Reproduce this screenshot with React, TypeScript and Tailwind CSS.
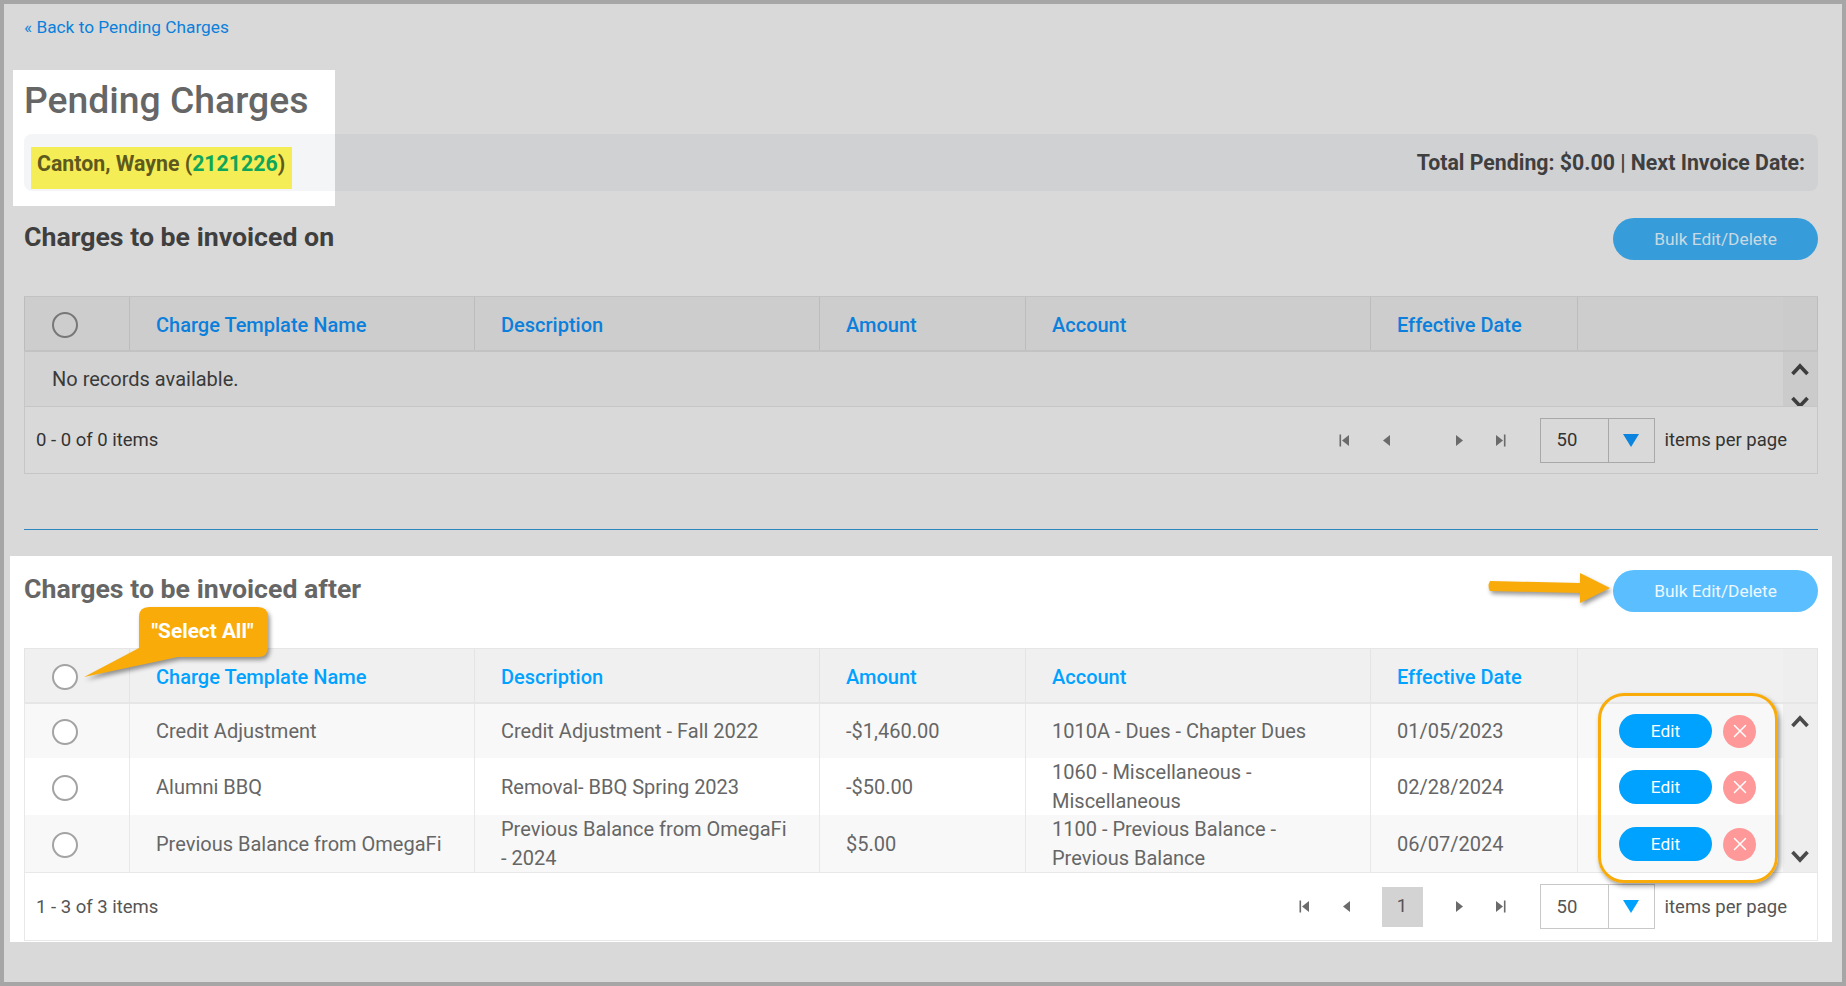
import React from 'react';
import { X } from 'lucide-react';

const columns = ['Charge Template Name', 'Description', 'Amount', 'Account', 'Effective Date'];

const charges = [
  { h: 'h-[54px]', bg: 'bg-[#f8f8f8]', name: 'Credit Adjustment', desc: 'Credit Adjustment - Fall 2022', amount: '-$1,460.00', account: '1010A - Dues - Chapter Dues', date: '01/05/2023' },
  { h: 'h-[57px]', bg: 'bg-white', name: 'Alumni BBQ', desc: 'Removal- BBQ Spring 2023', amount: '-$50.00', account: '1060 - Miscellaneous - Miscellaneous', date: '02/28/2024' },
  { h: 'h-[57px]', bg: 'bg-[#f8f8f8]', name: 'Previous Balance from OmegaFi', desc: 'Previous Balance from OmegaFi - 2024', amount: '$5.00', account: '1100 - Previous Balance - Previous Balance', date: '06/07/2024' },
];

function Radio({ dim }: { dim?: boolean }) {
  return (
    <span className={`block w-[26px] h-[26px] rounded-full border-2 ${dim ? 'border-[#777777]' : 'border-[#a3a3a3] bg-white'}`}></span>
  );
}

function Chevron({ up, className }: { up?: boolean; className?: string }) {
  return (
    <svg width="20" height="14" viewBox="0 0 20 14" className={className}>
      <path d={up ? 'M2.5 12 L10 4 L17.5 12' : 'M2.5 2 L10 10 L17.5 2'} fill="none" stroke="currentColor" strokeWidth="3.6" />
    </svg>
  );
}

function PageIcon({ dir, bar }: { dir: 'left' | 'right'; bar?: boolean }) {
  return (
    <svg width="11" height="13" viewBox="0 0 11 13" className="text-[#6b6b6b]">
      {dir === 'left' ? (
        <>
          {bar && <rect x="0.5" y="0.5" width="1.6" height="12" fill="currentColor" />}
          <path d="M10 1 L3 6.5 L10 12 Z" fill="currentColor" />
        </>
      ) : (
        <>
          <path d="M1 1 L8 6.5 L1 12 Z" fill="currentColor" />
          {bar && <rect x="8.9" y="0.5" width="1.6" height="12" fill="currentColor" />}
        </>
      )}
    </svg>
  );
}

function Footer({ dim, label, page }: { dim?: boolean; label: string; page?: boolean }) {
  return (
    <div className={`flex items-center justify-between pl-[11px] pr-[30px] border border-t-0 text-[18.5px] ${dim ? 'h-[67px] border-[#c6c6c6] text-[#333333]' : 'h-[68px] border-[#e8e8e8] text-[#555555]'}`}>
      <span className="pt-[2px]">{label}</span>
      <div className="flex items-center">
        <div className="flex items-center mr-[34px]">
          <span className="w-[41px] flex"><PageIcon dir="left" bar /></span>
          <span className={page ? 'w-[42px] flex' : 'w-[75px] flex'}><PageIcon dir="left" /></span>
          {page && <span className="w-[41px] h-10 mr-[32px] flex items-center justify-center bg-[#d3d3d3] text-[#555555]">1</span>}
          <span className="w-[40px] flex"><PageIcon dir="right" /></span>
          <span className="flex"><PageIcon dir="right" bar /></span>
        </div>
        <div className={`flex h-[45px] w-[115px] border ${dim ? 'border-[#a8a8a8]' : 'border-[#c8c8c8]'}`}>
          <span className="flex-1 pl-[16px] pt-[2px] flex items-center">50</span>
          <span className={`w-[46px] flex items-center justify-center border-l ${dim ? 'border-[#a8a8a8]' : 'border-[#c8c8c8]'}`}>
            <svg width="16" height="13" viewBox="0 0 16 13">
              <path d="M0 0 H16 L8 13 Z" className={dim ? 'fill-[#0a84de]' : 'fill-[#00a2ff]'} />
            </svg>
          </span>
        </div>
        <span className="ml-[10px] pt-[2px]">items per page</span>
      </div>
    </div>
  );
}

function Header({ dim }: { dim?: boolean }) {
  const line = dim ? 'border-[#bcbcbc]' : 'border-[#e4e4e4]';
  return (
    <div className={`grid grid-cols-[105px_345px_345px_206px_345px_207px_206px_35px] h-[56px] border-t border-b-2 ${dim ? 'bg-[#cdcdcd] border-[#c2c2c2]' : 'bg-[#f0f0f0] border-[#e6e6e6]'}`}>
      <div className={`flex items-center justify-center pt-[3px] border-l ${line}`}>
        <span className="-ml-[25px]"><Radio dim={dim} /></span>
      </div>
      {columns.map((c) => (
        <div key={c} className={`flex items-center pt-[3px] pl-[26px] border-l font-medium ${line} ${dim ? 'text-[#0a80dc]' : 'text-[#00a2ff]'}`}>{c}</div>
      ))}
      <div className={`border-l ${line}`}></div>
      <div className={`border-r ${line} ${dim ? 'bg-[#cbcbcb]' : 'bg-[#eeeeee]'}`}></div>
    </div>
  );
}

function Row({ h, bg, name, desc, amount, account, date }: (typeof charges)[number]) {
  return (
    <div className={`grid grid-cols-[105px_345px_345px_206px_345px_207px_206px] ${h} ${bg} text-[#666666] leading-[29px]`}>
      <div className="flex items-center justify-center border-l border-[#e8e8e8]">
        <span className="-ml-[25px] mt-px"><Radio /></span>
      </div>
      <div className="flex items-center pl-[26px] border-l border-[#e8e8e8]">{name}</div>
      <div className="flex items-center pl-[26px] pr-7 border-l border-[#e8e8e8]">{desc}</div>
      <div className="flex items-center pl-[26px] border-l border-[#e8e8e8]">{amount}</div>
      <div className="flex items-center pl-[26px] pr-4 border-l border-[#e8e8e8]">{account}</div>
      <div className="flex items-center pl-[26px] border-l border-[#e8e8e8]">{date}</div>
      <div className="flex items-center pl-[41px] border-l border-[#e8e8e8]">
        <button className="w-[93px] h-[34px] shrink-0 rounded-full bg-[#00a2ff] text-white text-[17.3px]">Edit</button>
        <span className="ml-[11px] w-[33px] h-[33px] shrink-0 rounded-full bg-[#ff9999] flex items-center justify-center">
          <X size={22} strokeWidth={1.6} className="text-white" />
        </span>
      </div>
    </div>
  );
}

export default function App() {
  return (
    <div className="relative w-[1846px] h-[986px] overflow-hidden border-4 border-[#a6a6a6] bg-[#d9d9d9] pl-5 pr-6 pt-[11px] font-[Roboto,sans-serif] text-xl">
      {/* white highlight behind the title */}
      <div className="absolute left-[9px] top-[66px] w-[322px] h-[136px] bg-white"></div>

      <a className="relative block text-[17.3px] leading-6 text-[#0a80dc]">« Back to Pending Charges</a>
      <h1 className="relative mt-[39px] text-[37.3px] leading-[44px] font-medium text-[#666666]">Pending Charges</h1>

      <div className="relative mt-[12px] flex h-[57px] text-[21.3px] font-bold">
        <div className="w-[311px] rounded-l-lg bg-[#f4f5f7] pl-[7px] pt-[13px]">
          <div className="w-[261px] h-[42px] bg-[#f5ed55] pl-[6px] pb-[8px] flex items-center text-[#5e5a1e] whitespace-nowrap">
            Canton, Wayne (<span className="text-[#0ea65a]">2121226</span>)
          </div>
        </div>
        <div className="flex-1 rounded-r-lg bg-[#d0d1d3] flex items-center justify-end pr-[13px] text-[#3f3f3f]">
          Total Pending: $0.00 | Next Invoice Date:
        </div>
      </div>

      <div className="mt-[27px] flex items-start justify-between">
        <h2 className="text-[26.7px] leading-[38px] font-bold text-[#3f3f3f]">Charges to be invoiced on</h2>
        <button className="w-[205px] h-[42px] rounded-full bg-[#379dda] text-[#c9d9e4] text-[17.3px]">Bulk Edit/Delete</button>
      </div>

      <div className="mt-[36px]">
        <Header dim />
        <div className="flex h-[55px] bg-[#d3d3d3] border-l border-r border-b border-[#c6c6c6]">
          <div className="flex-1 flex items-center pl-[27px] text-[#3a3a3a]">No records available.</div>
          <div className="w-[34px] overflow-hidden flex flex-col items-center pt-[10px] gap-[20px] bg-[#cbcbcb] text-[#3d3d3d]">
            <Chevron up className="shrink-0" />
            <Chevron className="shrink-0" />
          </div>
        </div>
        <Footer dim label="0 - 0 of 0 items" />
      </div>

      <div className="mt-[55px] h-px bg-[#2e86c1]"></div>

      <section className="mt-[26px] -mx-[14px] px-[14px] pt-[14px] pb-px bg-white">
        <div className="flex items-start justify-between">
          <h2 className="text-[26.7px] leading-[38px] font-bold text-[#666666]">Charges to be invoiced after</h2>
          <button className="w-[205px] h-[42px] rounded-full bg-[#5bbfff] text-[#eef8ff] text-[17.3px]">Bulk Edit/Delete</button>
        </div>
        <div className="mt-[36px]">
          <Header />
          <div className="flex border-r border-b border-[#e8e8e8]">
            <div className="w-[1759px]">
              {charges.map((c) => (
                <Row key={c.name} {...c} />
              ))}
            </div>
            <div className="flex-1 flex flex-col items-center justify-between pt-[10px] pb-[8px] bg-[#eeeeee] text-[#4a4a4a]">
              <Chevron up />
              <Chevron />
            </div>
          </div>
          <Footer label="1 - 3 of 3 items" page />
        </div>
      </section>

      {/* annotations on top of the screenshot */}
      <div className="absolute left-[1594px] top-[689px] w-[180px] h-[190px] rounded-[26px] border-[3.5px] border-[#f9ab0a] shadow-[2px_3px_5px_rgba(0,0,0,0.4)]"></div>

      <svg width="134" height="44" viewBox="0 0 134 44" className="absolute left-[1482px] top-[562px] drop-shadow-[2px_3px_2px_rgba(0,0,0,0.4)]">
        <path d="M4 15 L94 17 L94 7 L124 22 L94 37 L94 27 L4 25 Q1 20 4 15 Z" fill="#f9ab0a" />
      </svg>

      <div className="absolute left-[77px] top-[600px] w-[195px] h-[76px]">
        <svg width="195" height="76" viewBox="0 0 195 76" className="drop-shadow-[2px_3px_2px_rgba(0,0,0,0.4)]">
          <path d="M68 3 H177 Q187 3 187 13 V43 Q187 53 177 53 H97 L3 73 L58 44 V13 Q58 3 68 3 Z" fill="#f9ab0a" />
        </svg>
        <span className="absolute left-[57px] top-[3px] w-[129px] h-[50px] flex items-center justify-center font-bold text-[20.8px] text-white">"Select All"</span>
      </div>
    </div>
  );
}
